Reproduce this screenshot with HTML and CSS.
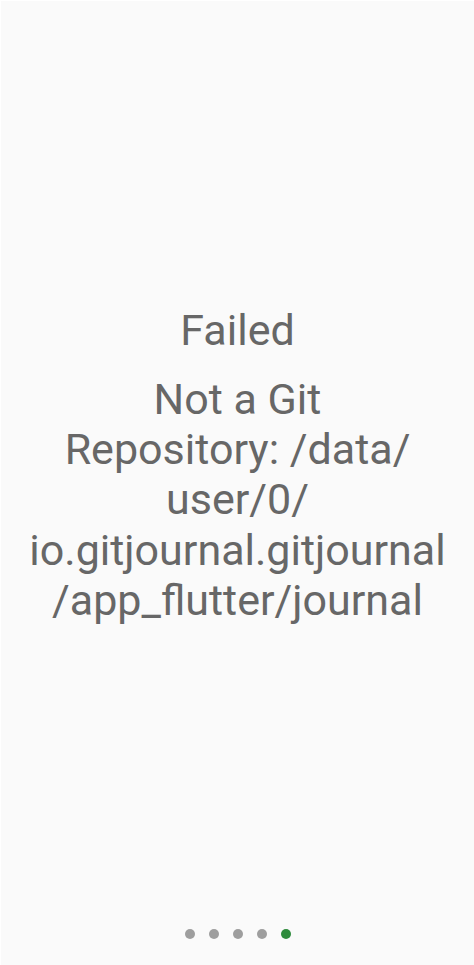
FILE: index.html
```html
<!DOCTYPE html>
<html>
<head>
<meta charset="utf-8">
<link rel="stylesheet" href="styles.css">
</head>
<body>
<div class="screen">
  <main class="content">
    <div class="title">Failed</div>
    <div class="message">Not a Git<br>Repository: /data/<br>user/0/<br>io.gitjournal.gitjournal<br>/app_flutter/journal</div>
  </main>
  <nav class="dots">
    <span class="dot"></span>
    <span class="dot"></span>
    <span class="dot"></span>
    <span class="dot"></span>
    <span class="dot active"></span>
  </nav>
</div>
</body>
</html>
```
FILE: styles.css
```css
html, body {
  margin: 0;
  padding: 0;
  background: #ffffff;
}
.screen {
  box-sizing: border-box;
  width: 474px;
  height: 965px;
  border-top: 1px solid #ffffff;
  border-left: 1px solid #ffffff;
  background: #fafafa;
  display: flex;
  flex-direction: column;
  font-family: Roboto, "Noto Sans", sans-serif;
  color: #676767;
  text-align: center;
}
.content {
  flex: 1;
  padding-top: 304px;
}
.title {
  font-size: 43px;
  line-height: 50px;
}
.message {
  margin-top: 19px;
  font-size: 43px;
  line-height: 50.2px;
}
.dots {
  display: flex;
  justify-content: center;
  gap: 14px;
  padding-bottom: 26px;
}
.dot {
  width: 10px;
  height: 10px;
  border-radius: 50%;
  background: #9e9e9e;
}
.dot.active {
  background: #2e8b3c;
}
```
